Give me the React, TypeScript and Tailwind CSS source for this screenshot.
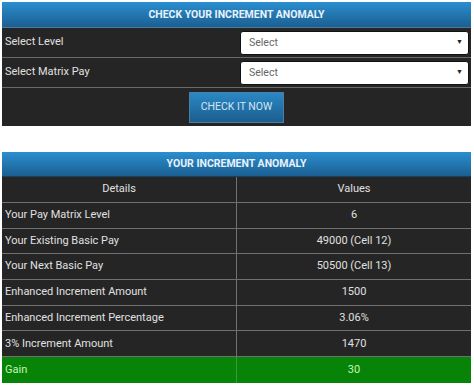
const rows: [string, string][] = [
  ["Your Pay Matrix Level", "6"],
  ["Your Existing Basic Pay", "49000 (Cell 12)"],
  ["Your Next Basic Pay", "50500 (Cell 13)"],
  ["Enhanced Increment Amount", "1500"],
  ["Enhanced Increment Percentage", "3.06%"],
  ["3% Increment Amount", "1470"],
];

const SelectBox = () => (
  <div className="flex h-[24px] w-[229px] items-center justify-between rounded-[3px] border border-[#111] bg-white pl-[8px] pr-[5px] text-[10.5px] text-[#666]">
    <span>Select</span>
    <span className="text-[7px] text-[#222]">▼</span>
  </div>
);

const App = () => {
  return (
    <div className="h-[386px] w-[474px] bg-white pl-[2px] pr-[3px] pt-[2px] font-['Roboto',sans-serif]">
      <div className="bg-[#252525]">
        <div className="flex h-[26px] items-center justify-center border-b border-[#4d7a99] bg-gradient-to-b from-[#2b8fd0] to-[#1b5f92] text-[10.5px] font-bold text-[#e8f2fa]">
          CHECK YOUR INCREMENT ANOMALY
        </div>
        <div className="flex h-[30px] items-center justify-between border-b border-[#6a6a6a] pr-[2px] pl-[3px] text-[11px] text-[#e0e0e0]">
          <span>Select Level</span>
          <SelectBox />
        </div>
        <div className="flex h-[30px] items-center justify-between border-b border-[#6a6a6a] pr-[2px] pl-[3px] text-[11px] text-[#e0e0e0]">
          <span>Select Matrix Pay</span>
          <SelectBox />
        </div>
        <div className="flex h-[38px] items-center justify-center">
          <button className="h-[31px] w-[95px] border border-[#4a7fa3] bg-gradient-to-b from-[#2a88c6] to-[#1c5e8e] text-[10.5px] text-[#d2e6f4]">
            CHECK IT NOW
          </button>
        </div>
      </div>

      <div className="mt-[26px] bg-[#252525] text-[11px] text-[#e0e0e0]">
        <div className="flex h-[25px] items-center justify-center border-b border-[#1a3f5c] bg-gradient-to-b from-[#2b8fd0] to-[#1b5f92] text-[10.5px] font-bold text-[#e8f2fa]">
          YOUR INCREMENT ANOMALY
        </div>
        <div className="grid h-[26px] grid-cols-[235px_1fr] border-b border-[#707070]">
          <div className="flex items-center justify-center border-r border-[#707070]">Details</div>
          <div className="flex items-center justify-center">Values</div>
        </div>
        {rows.map(([label, value]) => (
          <div key={label} className="grid h-[25.7px] grid-cols-[235px_1fr] border-b border-[#707070]">
            <div className="flex items-center border-r border-[#707070] pl-[3px]">{label}</div>
            <div className="flex items-center justify-center">{value}</div>
          </div>
        ))}
        <div className="grid h-[26px] grid-cols-[235px_1fr] bg-[#078407] text-[#c8f5b8]">
          <div className="flex items-center border-r border-[#3a9a3a] pl-[3px]">Gain</div>
          <div className="flex items-center justify-center">30</div>
        </div>
      </div>
    </div>
  );
};

export default App;
